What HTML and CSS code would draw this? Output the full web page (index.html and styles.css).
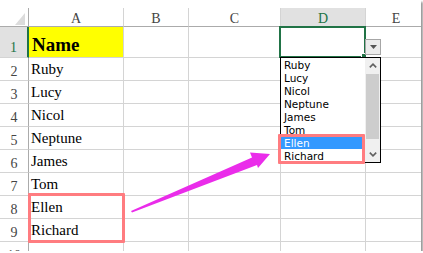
FILE: index.html
```html
<!DOCTYPE html>
<html lang="en">
<head>
<meta charset="utf-8">
<title>Drop-down list</title>
<link rel="stylesheet" href="styles.css">
</head>
<body>
<div class="frame">
  <div class="sheet">
    <div class="corner"><span class="tri"></span></div>
    <div class="h">A</div>
    <div class="h">B</div>
    <div class="h">C</div>
    <div class="h on">D</div>
    <div class="h last">E</div>

    <div class="r on">1</div>
    <div class="c name">Name</div>
    <div class="c"></div>
    <div class="c"></div>
    <div class="c"></div>
    <div class="c last"></div>

    <div class="r">2</div>
    <div class="c">Ruby</div>
    <div class="c"></div><div class="c"></div><div class="c"></div><div class="c last"></div>

    <div class="r">3</div>
    <div class="c">Lucy</div>
    <div class="c"></div><div class="c"></div><div class="c"></div><div class="c last"></div>

    <div class="r">4</div>
    <div class="c">Nicol</div>
    <div class="c"></div><div class="c"></div><div class="c"></div><div class="c last"></div>

    <div class="r">5</div>
    <div class="c">Neptune</div>
    <div class="c"></div><div class="c"></div><div class="c"></div><div class="c last"></div>

    <div class="r">6</div>
    <div class="c">James</div>
    <div class="c"></div><div class="c"></div><div class="c"></div><div class="c last"></div>

    <div class="r">7</div>
    <div class="c">Tom</div>
    <div class="c"></div><div class="c"></div><div class="c"></div><div class="c last"></div>

    <div class="r">8</div>
    <div class="c">Ellen</div>
    <div class="c"></div><div class="c"></div><div class="c"></div><div class="c last"></div>

    <div class="r">9</div>
    <div class="c">Richard</div>
    <div class="c"></div><div class="c"></div><div class="c"></div><div class="c last"></div>

    <div class="r">10</div>
    <div class="c"></div>
    <div class="c"></div><div class="c"></div><div class="c"></div><div class="c last"></div>
  </div>

  <div class="active"></div>
  <div class="handle"></div>

  <div class="dd-btn">
    <svg width="7" height="4" viewBox="0 0 7 4"><polygon points="0,0 7,0 3.5,4" fill="#555"/></svg>
  </div>

  <div class="list">
    <div class="items">
      <div class="item">Ruby</div>
      <div class="item">Lucy</div>
      <div class="item">Nicol</div>
      <div class="item">Neptune</div>
      <div class="item">James</div>
      <div class="item">Tom</div>
      <div class="item sel">Ellen</div>
      <div class="item">Richard</div>
    </div>
    <div class="scroll">
      <div class="sb-btn">
        <svg width="8" height="5" viewBox="0 0 8 5"><polyline points="0.8,4.4 4,1.2 7.2,4.4" fill="none" stroke="#606060" stroke-width="1.6"/></svg>
      </div>
      <div class="thumb"></div>
      <div class="track"></div>
      <div class="sb-btn">
        <svg width="8" height="5" viewBox="0 0 8 5"><polyline points="0.8,0.6 4,3.8 7.2,0.6" fill="none" stroke="#606060" stroke-width="1.6"/></svg>
      </div>
    </div>
  </div>

  <div class="hl hl-left"></div>
  <div class="hl hl-right"></div>

  <svg class="arrow" width="421" height="251" viewBox="0 0 421 251">
    <polygon points="131,211 252,157.5 250,152.5 270,154 258,168 257,165 132,212.5" fill="#ea2cea"/>
  </svg>
</div>
</body>
</html>
```

FILE: styles.css
```css
* {
  box-sizing: border-box;
}

body {
  margin: 0;
  background: #fff;
}

.frame {
  position: relative;
  width: 421px;
  height: 251px;
  overflow: hidden;
  background: #fff;
  box-shadow: 2px 2px 2px #999;
}

.sheet {
  display: grid;
  grid-template-columns: 29px 95px 65px 92px 85px 60px;
  grid-template-rows: 27px 31px repeat(9, 23px);
  font-family: "Liberation Serif", "Times New Roman", serif;
  color: #000;
}

.corner {
  margin-top: 8px;
  border-right: 1px solid #ababab;
  border-bottom: 1px solid #ababab;
  display: flex;
  justify-content: flex-end;
  align-items: flex-end;
  padding: 0 3px 1px 0;
}

.tri {
  width: 0;
  height: 0;
  border-left: 10px solid transparent;
  border-bottom: 12px solid #dcdcdc;
}

.h {
  margin-top: 8px;
  border-right: 1px solid #d4d4d4;
  border-bottom: 1px solid #ababab;
  font-size: 14px;
  line-height: 16px;
  padding-top: 3px;
  text-align: center;
  color: #444;
}

.h.on {
  background: #e1e1e1;
  color: #217346;
}

.r {
  border-right: 1px solid #ababab;
  border-bottom: 1px solid #d4d4d4;
  font-size: 14px;
  line-height: 17px;
  padding-top: 5px;
  text-align: center;
  color: #444;
}

.r.on {
  background: #e1e1e1;
  border-right: 2px solid #217346;
  color: #217346;
  padding-top: 12px;
}

.c {
  border-right: 1px solid #d4d4d4;
  border-bottom: 1px solid #d4d4d4;
  font-size: 15px;
  line-height: 17px;
  padding: 3px 0 0 2px;
  white-space: nowrap;
}

.c.name {
  background: #ffff00;
  font-weight: bold;
  font-size: 19px;
  line-height: 22px;
  padding: 7px 0 0 3px;
}

.last {
  border-right: none;
}

.active {
  position: absolute;
  left: 279px;
  top: 26px;
  width: 87px;
  height: 32px;
  border: 2px solid #217346;
}

.handle {
  position: absolute;
  left: 361px;
  top: 53px;
  width: 6px;
  height: 6px;
  background: #217346;
  border: 1px solid #fff;
}

.dd-btn {
  position: absolute;
  left: 365px;
  top: 39px;
  width: 16px;
  height: 16px;
  border: 1px solid #a6a6a6;
  background: #ececec;
  display: flex;
  align-items: center;
  justify-content: center;
}

.list {
  position: absolute;
  left: 280px;
  top: 57px;
  width: 101px;
  height: 106px;
  border: 1px solid #000;
  background: #fff;
  display: flex;
  font-family: "DejaVu Sans", Verdana, sans-serif;
  font-size: 10.5px;
}

.items {
  flex: 1;
  padding-top: 1px;
}

.item {
  height: 13px;
  line-height: 13px;
  padding-left: 3px;
  color: #000;
  white-space: nowrap;
}

.item.sel {
  background: linear-gradient(#3399ff, #3399ff) 0 0 / 100% 12px no-repeat;
  color: #fff;
}

.scroll {
  width: 15px;
  background: #f0f0f0;
  display: flex;
  flex-direction: column;
  align-items: center;
}

.sb-btn {
  height: 15px;
  width: 100%;
  display: flex;
  align-items: center;
  justify-content: center;
}

.thumb {
  width: 13px;
  height: 65px;
  margin-top: 1px;
  background: #cdcdcd;
}

.track {
  flex: 1;
}

.hl {
  position: absolute;
  border: 3px solid #ff7c80;
  border-radius: 1px;
}

.hl-left {
  left: 28px;
  top: 193px;
  width: 97px;
  height: 50px;
}

.hl-right {
  left: 278px;
  top: 134px;
  width: 87px;
  height: 30px;
}

.arrow {
  position: absolute;
  left: 0;
  top: 0;
  pointer-events: none;
}
```
